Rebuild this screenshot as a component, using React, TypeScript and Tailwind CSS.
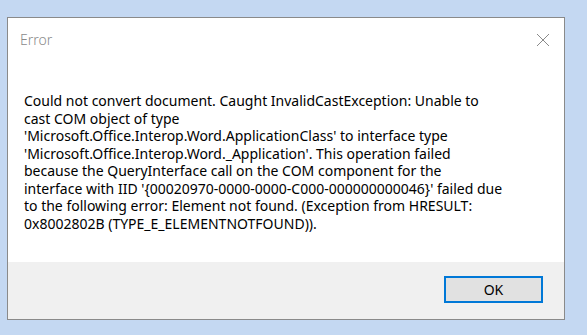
import React from "react";

const lines = [
  "Could not convert document. Caught InvalidCastException: Unable to",
  "cast COM object of type",
  "'Microsoft.Office.Interop.Word.ApplicationClass' to interface type",
  "'Microsoft.Office.Interop.Word._Application'. This operation failed",
  "because the QueryInterface call on the COM component for the",
  "interface with IID '{00020970-0000-0000-C000-000000000046}' failed due",
  "to the following error: Element not found. (Exception from HRESULT:",
  "0x8002802B (TYPE_E_ELEMENTNOTFOUND)).",
];

export default function App() {
  return (
    <div className="w-[587px] h-[335px] bg-[#c4d8f2] pt-[17px] pl-[7px]" style={{ fontFamily: '"Noto Sans", "Open Sans", sans-serif' }}>
      <div className="w-[558px] h-[303px] border border-[#8a8a8a] bg-white flex flex-col">
        <div className="h-[44px] flex items-center justify-between pl-[12px] pr-[14px] pb-[2px]">
          <span className="text-[14px] text-[#8a8a8a] font-light">Error</span>
          <svg width="14" height="14" viewBox="0 0 14 14" className="mt-[1px]">
            <path d="M1 1 L13 13 M13 1 L1 13" stroke="#8a8a8a" strokeWidth="1" fill="none" />
          </svg>
        </div>
        <div className="flex-1 pl-[16px] pt-[30px] text-[14px] leading-[17.5px] text-black">
          {lines.map((l, i) => (
            <div key={i} className="whitespace-nowrap">{l}</div>
          ))}
        </div>
        <div className="h-[57px] bg-[#f0f0f0] flex items-start justify-end pt-[14px] pr-[21px]">
          <button className="w-[99px] h-[27px] bg-[#e1e1e1] border-2 border-[#0078d7] text-[14px] text-black flex items-center justify-center">
            OK
          </button>
        </div>
      </div>
    </div>
  );
}
